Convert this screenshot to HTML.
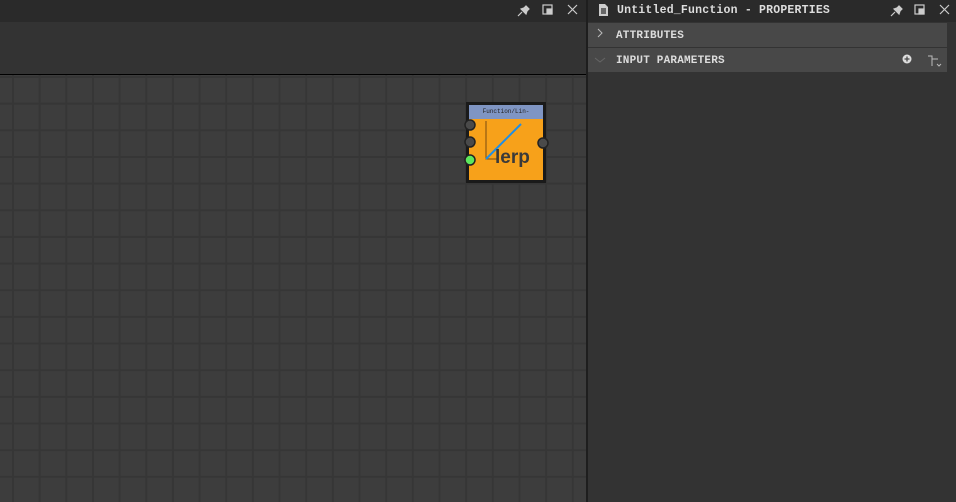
<!DOCTYPE html>
<html><head><style>
*{margin:0;padding:0;box-sizing:border-box}
body{width:956px;height:502px;background:#333;position:relative;overflow:hidden;font-family:"Liberation Mono","Noto Sans CJK SC",monospace}
.abs{position:absolute}
.canvas{left:0;top:75px;width:586px;height:427px;background-color:#3d3d3d;
background-image:linear-gradient(to right,#363636 0,#363636 2px,transparent 2px),linear-gradient(to bottom,#363636 0,#363636 2px,transparent 2px);
background-size:26.67px 26.67px;background-position:12px 1px}
.t{color:#ddd;font-weight:bold;font-size:11px;letter-spacing:0.2px}
.sec{left:588px;width:359px;height:24px;background:#484848}
</style></head><body>
<div class="abs" style="left:0;top:0;width:586px;height:22px;background:#2a2a2a"></div>
<div class="abs" style="left:0;top:22px;width:586px;height:52px;background:#333"></div>
<div class="abs" style="left:0;top:74px;width:586px;height:1px;background:#000"></div>
<div class="abs canvas"></div>
<div class="abs" style="left:586px;top:0;width:2px;height:502px;background:#1e1e1e"></div>
<div class="abs" style="left:588px;top:0;width:368px;height:22px;background:#2a2a2a"></div>
<svg class="abs" style="left:0;top:0" width="956" height="22">
<g stroke="#ccc" fill="#ccc" stroke-width="1.2">
<path d="M518 16l4-4" fill="none"/><path d="M521 9l5 5 1-3 2-2-3-3-2 2z"/>
<rect x="543" y="5" width="9" height="9" fill="none"/><rect x="547" y="9" width="5" height="5"/>
<path d="M568 5l9 9M577 5l-9 9" fill="none"/>
<path d="M891 16l4-4" fill="none"/><path d="M894 9l5 5 1-3 2-2-3-3-2 2z"/>
<rect x="915" y="5" width="9" height="9" fill="none"/><rect x="919" y="9" width="5" height="5"/>
<path d="M940 5l9 9M949 5l-9 9" fill="none"/>
<path d="M599 4h6l3 3v9h-9z" fill="#ccc" stroke="none"/><path d="M601 9h5M601 11h5M601 13h5" stroke="#2a2a2a"/>
</g></svg>
<div class="abs t" style="left:617px;top:4px;font-size:11.5px">Untitled_Function - PROPERTIES</div>
<div class="abs sec" style="top:23px"></div>
<div class="abs sec" style="top:48px"></div>
<svg class="abs" style="left:588px;top:23px" width="368" height="50">
<path d="M10 6l4 4-4 4" stroke="#bbb" fill="none"/>
<path d="M7 35l5 4 5-4" stroke="#666" fill="none"/>
<circle cx="319" cy="36" r="4.5" fill="#ddd"/><path d="M316.5 36h5M319 33.5v5" stroke="#484848" stroke-width="1.3"/>
<path d="M340 33h4v10M344 36h6M349 41l2 2 2-2" stroke="#bbb" fill="none"/>
</svg>
<div class="abs t" style="left:616px;top:30px">ATTRIBUTES</div>
<div class="abs t" style="left:616px;top:55px">INPUT PARAMETERS</div>
<div class="abs" style="left:466px;top:102px;width:80px;height:81px;background:#1a1a1a"></div>
<div class="abs" style="left:469px;top:105px;width:74px;height:75px;background:#f7a11a"></div>
<div class="abs" style="left:469px;top:105px;width:74px;height:14px;background:#7f95c3;font-size:6px;color:#222;text-align:center;line-height:14px">Function/Lin-</div>
<svg class="abs" style="left:460px;top:115px" width="100" height="60">
<path d="M26 6v38h12" stroke="#7a4a10" fill="none"/>
<path d="M26 44L61 9" stroke="#1e8ee6" stroke-width="2"/>
<circle cx="10" cy="10" r="5" fill="#4a4a4a" stroke="#222" stroke-width="1.5"/>
<circle cx="10" cy="27" r="5" fill="#4a4a4a" stroke="#222" stroke-width="1.5"/>
<circle cx="10" cy="45" r="5" fill="#5de85d" stroke="#222" stroke-width="1.5"/>
<circle cx="83" cy="28" r="5" fill="#4a4a4a" stroke="#222" stroke-width="1.5"/>
<text x="35" y="48" font-family="Liberation Sans,sans-serif" font-size="19" font-weight="bold" fill="#3a3a3a">lerp</text>
</svg>
</body></html>
